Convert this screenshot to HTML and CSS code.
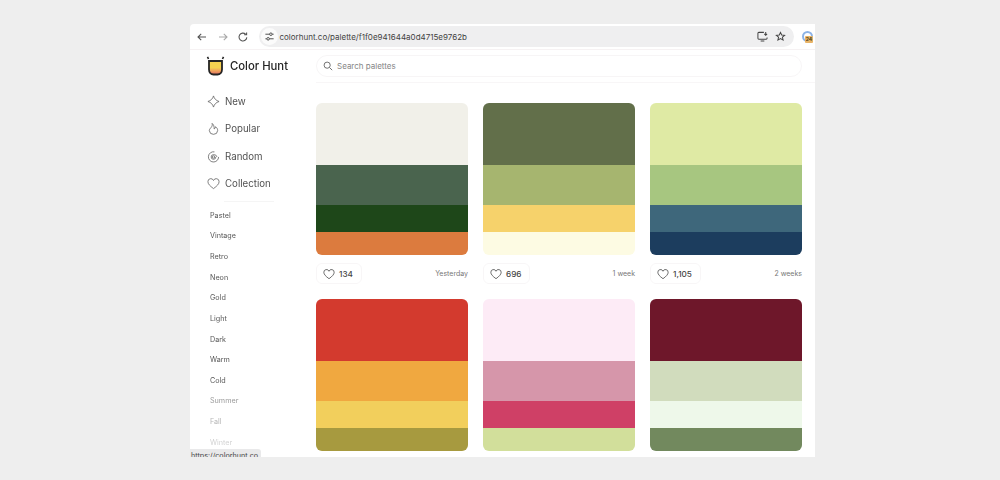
FILE: index.html
```html
<!DOCTYPE html>
<html lang="en">
<head>
<meta charset="utf-8">
<title>Color Hunt</title>
<link rel="stylesheet" href="styles.css">
</head>
<body>
<div class="window">
  <header class="chrome">
    <svg class="cicon" viewBox="0 0 12 12"><path d="M10 6H2M5.200 2.800 2 6l3.200 3.200"/></svg>
    <svg class="cicon dim" viewBox="0 0 12 12"><path d="M2 6h8M6.800 2.800 10 6 6.800 9.200"/></svg>
    <svg class="cicon" viewBox="0 0 12 12"><path d="M9.800 6.400A3.900 3.900 0 1 1 8.600 3.200M9.600 1.400v2.400H7.200"/></svg>
    <div class="omnibox">
      <span class="tune"><svg viewBox="0 0 12 12"><path d="M1.500 3.500h4.500M9 3.500h1.500M1.500 8.500H3M6 8.500h4.500"/><circle cx="7.500" cy="3.500" r="1.400"/><circle cx="4.500" cy="8.500" r="1.400"/></svg></span>
      <span class="url">colorhunt.co/palette/f1f0e941644a0d4715e9762b</span>
      <svg class="oicon" viewBox="0 0 12 12"><path d="M7.500 1.500H2a1 1 0 0 0-1 1V8a1 1 0 0 0 1 1h8a1 1 0 0 0 1-1V7M4 11h4M9.500 1v3.500M8 3.200l1.500 1.500L11 3.200"/></svg>
      <svg class="oicon" viewBox="0 0 12 12"><path d="m6 1.500 1.300 2.900 3.200.3-2.400 2.100.7 3.100L6 8.300 3.200 9.900l.7-3.100-2.400-2.100 3.200-.3z"/></svg>
    </div>
    <div class="ext"><span class="ext-badge">24</span></div>
  </header>

  <div class="page">
    <aside class="sidebar">
      <div class="brand">
        <svg class="logo" viewBox="1.500 0 22 20">
          <defs>
            <linearGradient id="cup" x1="0" y1="0" x2="0" y2="1">
              <stop offset="0.5" stop-color="#f6d24e"/>
              <stop offset="0.72" stop-color="#f0a25a"/>
              <stop offset="1" stop-color="#dd6a62"/>
            </linearGradient>
          </defs>
          <path class="logo-l" fill="url(#cup)" d="M4.500 5h13v8.500c0 3-2 5-4.500 5H9c-2.500 0-4.500-2-4.500-5z"/>
          <path class="logo-t" d="M3 .8 4 3M19 .8 18 3"/>
        </svg>
        <span class="brand-name">Color Hunt</span>
      </div>
      <nav class="nav">
        <a class="nav-item"><svg viewBox="0 0 14 14"><path d="M7 1c.8 3 2.800 5 6 6-3.200 1-5.200 3-6 6-.8-3-2.800-5-6-6 3.200-1 5.200-3 6-6z"/></svg>New</a>
        <a class="nav-item"><svg viewBox="0 0 14 14"><path d="M5.500 1.500c.5 2 0 3-1 4.300C3.500 7 2.500 8 2.500 9.300A4.500 4.500 0 0 0 7 13.300a4.500 4.500 0 0 0 4.500-4.200c0-1.800-1-3.100-2.300-4-.1 1.200-.6 2-1.500 2.400.2-2.500-.5-4.700-2.200-6z"/></svg>Popular</a>
        <a class="nav-item"><svg viewBox="0 0 14 14"><circle cx="7" cy="7.500" r="1.300"/><path d="M9.500 7.500A2.500 2.500 0 1 1 7 5a3.500 3.500 0 0 1 3.800 2.500M12.500 7.500A5.500 5.500 0 1 1 8 2"/></svg>Random</a>
        <a class="nav-item"><svg viewBox="0 0 14 14"><path d="M7 12.500C3 9.500 1 7.500 1 5a3.100 3.100 0 0 1 6-1.200A3.100 3.100 0 0 1 13 5c0 2.500-2 4.500-6 7.500z"/></svg>Collection</a>
      </nav>
      <hr class="rule">
      <ul class="tags">
        <li>Pastel</li><li>Vintage</li><li>Retro</li><li>Neon</li><li>Gold</li><li>Light</li>
        <li>Dark</li><li>Warm</li><li>Cold</li><li class="fade1">Summer</li><li class="fade2">Fall</li><li class="fade3">Winter</li>
      </ul>
    </aside>

    <main class="main">
      <div class="topbar">
        <div class="search">
          <svg viewBox="0 0 12 12"><circle cx="5" cy="5" r="3.700"/><path d="m8 8 3 3"/></svg>
          <span>Search palettes</span>
        </div>
      </div>
      <div class="grid">
        <article class="card">
          <div class="palette">
            <i class="s1 c-f1f0e9"></i><i class="s2 c-41644a"></i><i class="s3 c-0d4715"></i><i class="s4 c-e9762b"></i>
          </div>
          <div class="meta"><button class="like"><svg viewBox="0 0 14 14"><path d="M7 12.500C3 9.500 1 7.500 1 5a3.100 3.100 0 0 1 6-1.200A3.100 3.100 0 0 1 13 5c0 2.500-2 4.500-6 7.500z"/></svg>134</button><span class="when">Yesterday</span></div>
        </article>
        <article class="card">
          <div class="palette">
            <i class="s1 c-626f47"></i><i class="s2 c-a4b465"></i><i class="s3 c-f5d26a"></i><i class="s4 c-fefae0"></i>
          </div>
          <div class="meta"><button class="like"><svg viewBox="0 0 14 14"><path d="M7 12.500C3 9.500 1 7.500 1 5a3.100 3.100 0 0 1 6-1.200A3.100 3.100 0 0 1 13 5c0 2.500-2 4.500-6 7.500z"/></svg>696</button><span class="when">1 week</span></div>
        </article>
        <article class="card">
          <div class="palette">
            <i class="s1 c-dfeaa3"></i><i class="s2 c-a8c87f"></i><i class="s3 c-3e677b"></i><i class="s4 c-1b3c5d"></i>
          </div>
          <div class="meta"><button class="like"><svg viewBox="0 0 14 14"><path d="M7 12.500C3 9.500 1 7.500 1 5a3.100 3.100 0 0 1 6-1.200A3.100 3.100 0 0 1 13 5c0 2.500-2 4.500-6 7.500z"/></svg>1,105</button><span class="when">2 weeks</span></div>
        </article>
        <article class="card">
          <div class="palette">
            <i class="s1 c-d3392c"></i><i class="s2 c-f1a83f"></i><i class="s3 c-f3cf5c"></i><i class="s4 c-a89a3e"></i>
          </div>
        </article>
        <article class="card">
          <div class="palette">
            <i class="s1 c-fdebf6"></i><i class="s2 c-d696aa"></i><i class="s3 c-cf4066"></i><i class="s4 c-d2df9b"></i>
          </div>
        </article>
        <article class="card">
          <div class="palette">
            <i class="s1 c-6e1729"></i><i class="s2 c-d1dcbd"></i><i class="s3 c-eef8ea"></i><i class="s4 c-72895e"></i>
          </div>
        </article>
      </div>
    </main>
  </div>
  <div class="status">https://colorhunt.co</div>
</div>
</body>
</html>
```

FILE: styles.css
```css
* { box-sizing: border-box; }
html, body { margin: 0; height: 100%; overflow: hidden; }
body {
  background: #eeeeee;
  padding: 24px 185px 23px 190px;
  font-family: Inter, "Liberation Sans", sans-serif;
  color: #333;
}
.window {
  position: relative;
  height: 433px;
  background: #fff;
  border-radius: 4px 0 0 0;
  overflow: hidden;
  display: flex;
  flex-direction: column;
  filter: blur(0.4px);
}
.sidebar, .url, .search, .meta, .status { opacity: 0.99; }

/* Browser bar */
.chrome {
  flex: none;
  height: 26px;
  display: flex;
  align-items: center;
  padding: 0 0 0 6px;
  gap: 8.500px;
  border-bottom: 1px solid #f6f2f3;
}
.cicon { width: 12px; height: 12px; flex: none; fill: none; stroke: #555; stroke-width: 1.100; }
.cicon.dim { stroke: #a9a9a9; }
.omnibox {
  flex: none;
  width: 535px;
  height: 21px;
  margin-left: 1px;
  background: #efeff0;
  border-radius: 11px;
  display: flex;
  align-items: center;
  gap: 7px;
  padding-right: 8px;
}
.tune {
  width: 17px;
  height: 17px;
  margin-left: 2px;
  background: #fbfbfb;
  border-radius: 50%;
  display: flex;
  align-items: center;
  justify-content: center;
}
.tune svg { width: 11px; height: 11px; fill: none; stroke: #444; stroke-width: 1; }
.url { flex: 1; margin-left: -5px; font-size: 8px; font-weight: 400; color: #3f3f41; white-space: nowrap; }
.oicon { width: 11px; height: 11px; margin-left: 0; fill: none; stroke: #444; stroke-width: 1.100; }
.ext {
  position: relative;
  flex: none;
  width: 11px;
  height: 11px;
  border-radius: 50%;
  border: 2px solid #8db3e6;
}
.ext-badge {
  position: absolute;
  left: 1px;
  top: 3px;
  width: 8px;
  height: 7px;
  background: #e8b468;
  border-radius: 1px;
  font-size: 5px;
  font-weight: 700;
  line-height: 7px;
  text-align: center;
  color: #4a3b16;
}

/* Page */
.page { flex: 1; min-height: 0; display: flex; overflow: hidden; }
.sidebar { flex: none; width: 126px; padding: 5px 0 0 16px; overflow: hidden; }
.brand { display: flex; align-items: center; gap: 2px; height: 22px; }
.logo { width: 22px; height: 20px; flex: none; }
.logo-l { stroke: #222; stroke-width: 1.800; }
.logo-t { fill: none; stroke: #222; stroke-width: 1.600; }
.brand-name { font-size: 11.300px; font-weight: 500; color: #222; white-space: nowrap; }
.nav { display: flex; flex-direction: column; margin-top: 10.500px; }
.nav-item {
  height: 27.500px;
  display: flex;
  align-items: center;
  gap: 5px;
  margin-left: 1px;
  font-size: 9.700px;
  font-weight: 400;
  color: #4f4f4f;
}
.nav-item svg { width: 13px; height: 13px; flex: none; fill: none; stroke: #666; stroke-width: 0.900; }
.rule { width: 50px; height: 1px; margin: 3.500px 0 0 18px; border: 0; background: #f5f5f5; }
.tags { list-style: none; margin: 3px 0 0; padding: 0 0 0 4px; }
.tags li { height: 20.640px; display: flex; align-items: center; font-size: 7.200px; color: #555; }
.tags .fade1 { color: #9a9a9a; }
.tags .fade2 { color: #b5b5b5; }
.tags .fade3 { color: #d2d2d2; }

/* Main */
.main { flex: 1; min-width: 0; padding: 5px 13px 0 0; overflow: hidden; }
.topbar {
  height: 28px;
  margin-right: -13px;
  padding-right: 13px;
  border-bottom: 1px solid #f8f6f7;
}
.search {
  height: 22px;
  display: flex;
  align-items: center;
  gap: 4px;
  padding: 0 0 1px 6px;
  border: 1px solid #f7f5f6;
  border-radius: 11px;
  font-size: 8px;
  color: #858585;
}
.search svg { width: 10px; height: 10px; fill: none; stroke: #555; stroke-width: 1; }
.grid {
  display: grid;
  grid-template-columns: repeat(3, 152px);
  justify-content: space-between;
  margin-top: 20px;
}
.card { height: 196px; }
.palette {
  height: 152px;
  display: flex;
  flex-direction: column;
  border-radius: 6px;
  overflow: hidden;
}
.palette i { display: block; }
.s1 { height: 62px; }
.s2 { height: 40px; }
.s3 { height: 27px; }
.s4 { height: 23px; }
.c-f1f0e9 { background: #f1f0e9; }
.c-41644a { background: #4a644e; }
.c-0d4715 { background: #1e4719; }
.c-e9762b { background: #dc7b3e; }
.c-626f47 { background: #626f4a; }
.c-a4b465 { background: #a6b56f; }
.c-f5d26a { background: #f6d26b; }
.c-fefae0 { background: #fdfbe3; }
.c-dfeaa3 { background: #dfeaa4; }
.c-a8c87f { background: #a7c680; }
.c-3e677b { background: #3e677b; }
.c-1b3c5d { background: #1c3d5e; }
.c-d3392c { background: #d33a2e; }
.c-f1a83f { background: #f0a840; }
.c-f3cf5c { background: #f2cf5c; }
.c-a89a3e { background: #a79a3f; }
.c-fdebf6 { background: #fdebf6; }
.c-d696aa { background: #d696aa; }
.c-cf4066 { background: #cf4066; }
.c-d2df9b { background: #d2df9b; }
.c-6e1729 { background: #6e172a; }
.c-d1dcbd { background: #d1dcbd; }
.c-eef8ea { background: #eef8ea; }
.c-72895e { background: #72895e; }
.meta {
  display: flex;
  align-items: center;
  justify-content: space-between;
  margin-top: 8px;
}
.like {
  height: 21px;
  display: flex;
  align-items: center;
  gap: 4px;
  padding: 0 8px 0 6px;
  background: #fff;
  border: 1px solid #f8f6f7;
  border-radius: 6px;
  font: 500 8.200px Inter, "Liberation Sans", sans-serif;
  color: #444;
}
.like svg { width: 12px; height: 12px; fill: none; stroke: #444; stroke-width: 0.900; }
.when { font-size: 7px; color: #777; }

/* Link status bubble over the page */
.status {
  position: absolute;
  left: 0;
  bottom: 0;
  width: 71px;
  height: 8px;
  padding: 3px 0 0 1px;
  background: #e9e9ea;
  border-radius: 0 3px 0 0;
  font-size: 7.200px;
  line-height: 8px;
  color: #444;
  overflow: hidden;
  white-space: nowrap;
}
```
